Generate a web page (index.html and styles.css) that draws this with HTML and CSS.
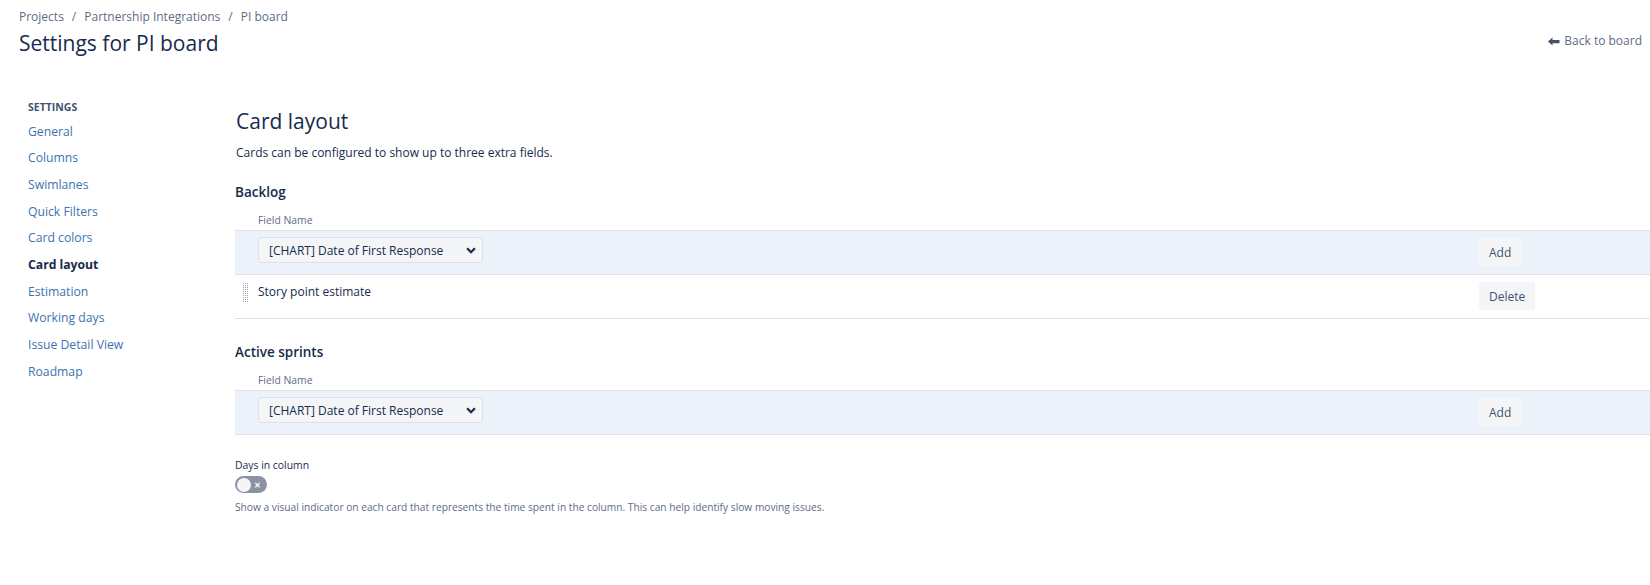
FILE: index.html
```html
<!DOCTYPE html>
<html lang="en">
<head>
<meta charset="utf-8">
<title>Settings for PI board</title>
<link rel="stylesheet" href="styles.css">
</head>
<body>
<div class="page">
  <header class="header">
    <div class="header-left">
      <nav class="breadcrumbs">
        <a href="#">Projects</a><span class="sep">/</span><a href="#">Partnership Integrations</a><span class="sep">/</span><a href="#">PI board</a>
      </nav>
      <h1 class="title">Settings for PI board</h1>
    </div>
    <a class="back" href="#">
      <svg class="back-icon" width="12" height="9" viewBox="0 0 12 9"><path d="M0 4.5 L4.5 0.5 V3 H11.5 V6.2 H4.5 V8.5 Z" fill="#42526e"/></svg>
      <span>Back to board</span>
    </a>
  </header>

  <div class="body">
    <aside class="sidebar">
      <div class="side-heading">SETTINGS</div>
      <ul class="side-list">
        <li><a href="#">General</a></li>
        <li><a href="#">Columns</a></li>
        <li><a href="#">Swimlanes</a></li>
        <li><a href="#">Quick Filters</a></li>
        <li><a href="#">Card colors</a></li>
        <li class="active"><a href="#">Card layout</a></li>
        <li><a href="#">Estimation</a></li>
        <li><a href="#">Working days</a></li>
        <li><a href="#">Issue Detail View</a></li>
        <li><a href="#">Roadmap</a></li>
      </ul>
    </aside>

    <main class="main">
      <h2 class="page-title">Card layout</h2>
      <p class="desc">Cards can be configured to show up to three extra fields.</p>

      <section class="block">
        <h3 class="block-title">Backlog</h3>
        <div class="col-head">Field Name</div>
        <div class="table">
          <div class="row row-add">
            <div class="cell-main">
              <div class="select"><span>[CHART] Date of First Response</span>
                <svg class="chev" width="10" height="7" viewBox="0 0 10 7"><path d="M1.1 1.3 L5 5.2 L8.9 1.3" fill="none" stroke="#172b4d" stroke-width="2.3"/></svg>
              </div>
            </div>
            <div class="cell-action"><button class="btn">Add</button></div>
          </div>
          <div class="row">
            <div class="cell-main cell-field">
              <span class="handle"></span>
              <span class="field-text">Story point estimate</span>
            </div>
            <div class="cell-action"><button class="btn">Delete</button></div>
          </div>
        </div>
      </section>

      <section class="block block-second">
        <h3 class="block-title">Active sprints</h3>
        <div class="col-head">Field Name</div>
        <div class="table">
          <div class="row row-add">
            <div class="cell-main">
              <div class="select"><span>[CHART] Date of First Response</span>
                <svg class="chev" width="10" height="7" viewBox="0 0 10 7"><path d="M1.1 1.3 L5 5.2 L8.9 1.3" fill="none" stroke="#172b4d" stroke-width="2.3"/></svg>
              </div>
            </div>
            <div class="cell-action"><button class="btn">Add</button></div>
          </div>
        </div>
      </section>

      <section class="days">
        <div class="days-label">Days in column</div>
        <div class="toggle"><span class="knob"></span><span class="x">&#x2715;</span></div>
        <div class="days-help">Show a visual indicator on each card that represents the time spent in the column. This can help identify slow moving issues.</div>
      </section>
    </main>
  </div>
</div>
</body>
</html>
```

FILE: styles.css
```css
* { box-sizing: border-box; }
html, body { margin: 0; padding: 0; background: #fff; }
body {
  font-family: "Open Sans", "Noto Sans", sans-serif;
  color: #172b4d;
  font-size: 12px;
  overflow: hidden;
}
a { text-decoration: none; }

.page { padding: 7px 0 0 19px; }

.header {
  display: flex;
  justify-content: space-between;
  align-items: flex-end;
}
.breadcrumbs {
  font-size: 12px;
  line-height: 20px;
  color: #5e6c84;
}
.breadcrumbs a { color: #5e6c84; }
.breadcrumbs .sep { margin: 0 8px; }
.title {
  margin: 2px 0 0;
  font-size: 21px;
  line-height: 28px;
  font-weight: 500;
  color: #172b4d;
}
.back {
  display: flex;
  align-items: center;
  gap: 4px;
  color: #5e6c84;
  font-size: 12px;
  line-height: 20px;
  margin: 0 8px 6px 0;
}
.back-icon { display: block; }

.body {
  display: flex;
  margin-top: 42px;
}
.sidebar {
  width: 216px;
  flex: none;
  padding-left: 9px;
}
.side-heading {
  font-size: 10.5px;
  font-weight: 700;
  color: #42526e;
  line-height: 16px;
}
.side-list {
  list-style: none;
  margin: 3.5px 0 0;
  padding: 0;
}
.side-list li {
  line-height: 26.7px;
  font-size: 12.2px;
}
.side-list a { color: #3b73af; }
.side-list li.active a { color: #172b4d; font-weight: 700; }

.main {
  flex: 1;
  min-width: 0;
  padding-top: 7px;
}
.page-title {
  margin: 0 0 0 1px;
  font-size: 21px;
  line-height: 30px;
  font-weight: 500;
}
.desc {
  margin: 6.5px 0 0 1px;
  line-height: 20px;
}
.block { margin-top: 19.5px; }
.block-second { margin-top: 23px; }
.block-title {
  margin: 0;
  font-size: 13.5px;
  font-weight: 600;
  line-height: 20px;
}
.col-head {
  font-size: 10.4px;
  line-height: 16px;
  color: #5e6c84;
  padding-left: 23px;
  margin-top: 10px;
  margin-bottom: 2px;
}
.table { border-top: 1px solid #dfe1e6; }
.row {
  display: flex;
  height: 44px;
  border-bottom: 1px solid #dfe1e6;
}
.row-add { background: #ebf2f9; }
.cell-main {
  flex: 1;
  padding: 6px 0 0 23px;
}
.cell-field {
  display: flex;
  align-items: flex-start;
  padding-left: 7px;
  padding-top: 7px;
}
.handle {
  width: 7px;
  height: 20px;
  flex: none;
  background-image:
    linear-gradient(90deg, #fff 1px, transparent 1px),
    linear-gradient(#fff 1px, #9aa3b0 1px);
  background-size: 2px 2px;
}
.field-text {
  margin-left: 9px;
  line-height: 20px;
}
.cell-action {
  width: 171px;
  flex: none;
  padding-top: 7px;
}
.select {
  width: 225px;
  height: 26px;
  display: flex;
  align-items: center;
  justify-content: space-between;
  padding: 0 6px 0 10px;
  background: #f4f5f7;
  border: 1px solid #dfe1e6;
  border-radius: 3px;
  color: #172b4d;
}
.chev { display: block; }
.btn {
  font-family: inherit;
  font-size: 12px;
  color: #42526e;
  background: #f4f5f7;
  border: none;
  border-radius: 3px;
  height: 28px;
  padding: 0 10px;
  cursor: pointer;
}

.days { margin-top: 22px; }
.days-label {
  font-size: 10.4px;
  line-height: 16px;
}
.toggle {
  width: 32px;
  height: 17px;
  border-radius: 9px;
  background: #8993a4;
  display: flex;
  align-items: center;
  justify-content: space-between;
  padding: 0 6px 0 1.5px;
  margin-top: 3px;
}
.knob {
  width: 14px;
  height: 14px;
  border-radius: 50%;
  background: #f4f5f7;
}
.x {
  color: #fff;
  font-size: 8px;
  font-weight: 700;
  line-height: 1;
}
.days-help {
  font-size: 10.2px;
  line-height: 16px;
  color: #5e6c84;
  margin-top: 6px;
}
```
